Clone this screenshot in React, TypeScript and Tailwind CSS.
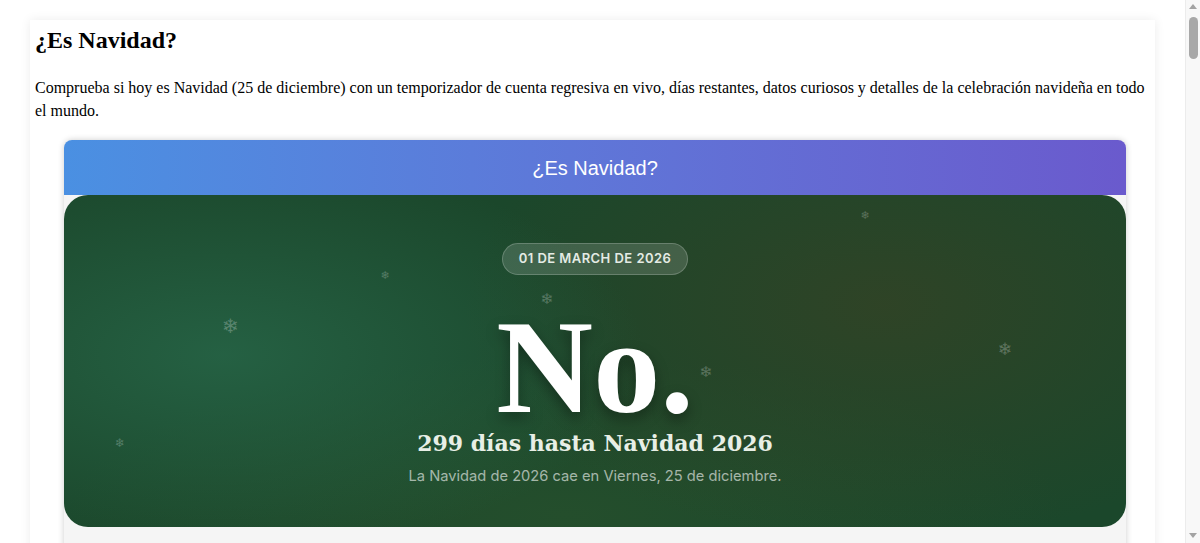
const flakes = [
  { x: 168, y: 131, s: 20 },
  { x: 322, y: 80, s: 11 },
  { x: 484, y: 104, s: 15 },
  { x: 802, y: 20, s: 11 },
  { x: 643, y: 177, s: 15 },
  { x: 942, y: 154, s: 17 },
  { x: 57, y: 248, s: 12 },
];

function Flake({ x, y, s }: { x: number; y: number; s: number }) {
  return (
    <span
      className="absolute text-white/25 leading-none font-['DejaVu_Sans',sans-serif]"
      style={{ left: x - s / 2, top: y - s / 2, fontSize: s }}
    >
      ❄
    </span>
  );
}

function FakeScrollbar() {
  return (
    <div className="fixed right-0 top-0 h-full w-[15px] bg-[#f8f8f8] border-l border-[#ececec]">
      <div className="mx-auto mt-[4px] w-0 h-0 border-x-[4px] border-x-transparent border-b-[5px] border-b-[#a3a3a3]" />
      <div className="mx-auto mt-[8px] w-[9px] h-[42px] rounded-full bg-[#a8a8a8]" />
      <div className="absolute bottom-[5px] left-[3px] w-0 h-0 border-x-[4px] border-x-transparent border-t-[5px] border-t-[#a3a3a3]" />
    </div>
  );
}

export default function App() {
  return (
    <div className="min-h-[5000px] bg-white pt-5">
      <FakeScrollbar />
      <div className="ml-[30px] mr-[45px] bg-white p-[5px] shadow-[0_0_10px_rgba(0,0,0,0.08)] font-['Liberation_Serif',serif] text-black">
        <h2 className="text-[24px] font-bold leading-[28px] mt-[1px]">¿Es Navidad?</h2>
        <p className="mt-[22px] text-[16px] leading-[23px]">
          Comprueba si hoy es Navidad (25 de diciembre) con un temporizador de cuenta regresiva en vivo, días restantes, datos curiosos y detalles de la celebración navideña en todo el mundo.
        </p>

        <div className="mt-[18px] ml-[29px] w-[1062px] rounded-lg bg-[#f5f5f5] shadow-[0_0_6px_rgba(0,0,0,0.2)] min-h-[4700px]">
          <div className="h-[55px] rounded-t-lg bg-gradient-to-r from-[#4a90e2] to-[#6a5acd] flex items-center justify-center">
            <span className="font-['Liberation_Sans',sans-serif] text-[20px] text-white">¿Es Navidad?</span>
          </div>

          <div className="relative h-[332px] overflow-hidden rounded-[24px] bg-[#1b472b] bg-[radial-gradient(ellipse_420px_200px_at_160px_160px,rgba(40,105,75,0.75),transparent),radial-gradient(ellipse_420px_240px_at_820px_110px,rgba(60,65,35,0.6),transparent),radial-gradient(ellipse_500px_160px_at_500px_320px,rgba(45,85,45,0.5),transparent)]">
            {flakes.map((f, i) => (
              <Flake key={i} {...f} />
            ))}
            <div className="relative flex flex-col items-center pt-[48px]">
              <div className="h-[32px] px-[16px] flex items-center rounded-full bg-white/15 border border-white/20 font-['Inter',sans-serif] text-[13px] font-semibold tracking-[0.035em] text-[#e4ebe4]">
                01 DE MARCH DE 2026
              </div>
              <div className="mt-[32px] font-['Liberation_Serif',serif] font-bold text-[134px] leading-[120px] text-white [text-shadow:0_6px_14px_rgba(0,0,0,0.35)]">
                No.
              </div>
              <div className="mt-[1px] font-['DejaVu_Serif',serif] font-bold text-[22px] leading-[30px] text-[#e8efe6]">
                299 días hasta Navidad 2026
              </div>
              <div className="mt-[8px] font-['Inter',sans-serif] text-[14.7px] leading-[20px] text-white/60">
                La Navidad de 2026 cae en Viernes, 25 de diciembre.
              </div>
            </div>
          </div>
        </div>
      </div>
    </div>
  );
}
